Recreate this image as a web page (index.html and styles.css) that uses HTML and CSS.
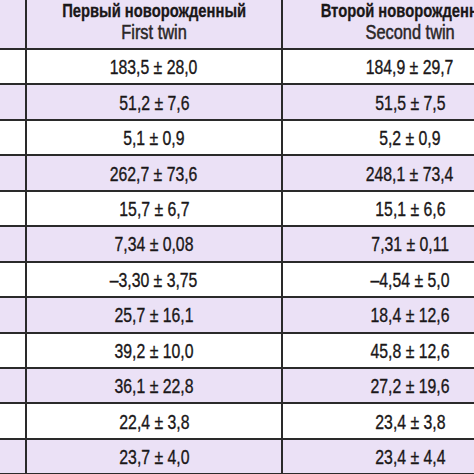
FILE: index.html
```html
<!DOCTYPE html>
<html lang="ru">
<head>
<meta charset="utf-8">
<link rel="stylesheet" href="styles.css">
</head>
<body>
<div class="viewport">
  <div class="table">
    <div class="row head">
      <div class="cell label"></div>
      <div class="cell"><span class="ru">Первый новорожденный</span><span class="en">First twin</span></div>
      <div class="cell"><span class="ru">Второй новорожденный</span><span class="en">Second twin</span></div>
    </div>
    <div class="row"><div class="cell label"></div><div class="cell"><span class="v">183,5 ± 28,0</span></div><div class="cell"><span class="v">184,9 ± 29,7</span></div></div>
    <div class="row alt"><div class="cell label"></div><div class="cell"><span class="v">51,2 ± 7,6</span></div><div class="cell"><span class="v">51,5 ± 7,5</span></div></div>
    <div class="row"><div class="cell label"></div><div class="cell"><span class="v">5,1 ± 0,9</span></div><div class="cell"><span class="v">5,2 ± 0,9</span></div></div>
    <div class="row alt"><div class="cell label"></div><div class="cell"><span class="v">262,7 ± 73,6</span></div><div class="cell"><span class="v">248,1 ± 73,4</span></div></div>
    <div class="row"><div class="cell label"></div><div class="cell"><span class="v">15,7 ± 6,7</span></div><div class="cell"><span class="v">15,1 ± 6,6</span></div></div>
    <div class="row alt"><div class="cell label"></div><div class="cell"><span class="v">7,34 ± 0,08</span></div><div class="cell"><span class="v">7,31 ± 0,11</span></div></div>
    <div class="row"><div class="cell label"></div><div class="cell"><span class="v">–3,30 ± 3,75</span></div><div class="cell"><span class="v">–4,54 ± 5,0</span></div></div>
    <div class="row alt"><div class="cell label"></div><div class="cell"><span class="v">25,7 ± 16,1</span></div><div class="cell"><span class="v">18,4 ± 12,6</span></div></div>
    <div class="row"><div class="cell label"></div><div class="cell"><span class="v">39,2 ± 10,0</span></div><div class="cell"><span class="v">45,8 ± 12,6</span></div></div>
    <div class="row alt"><div class="cell label"></div><div class="cell"><span class="v">36,1 ± 22,8</span></div><div class="cell"><span class="v">27,2 ± 19,6</span></div></div>
    <div class="row"><div class="cell label"></div><div class="cell"><span class="v">22,4 ± 3,8</span></div><div class="cell"><span class="v">23,4 ± 3,8</span></div></div>
    <div class="row alt"><div class="cell label"></div><div class="cell"><span class="v">23,7 ± 4,0</span></div><div class="cell"><span class="v">23,4 ± 4,4</span></div></div>
  </div>
</div>
</body>
</html>
```

FILE: styles.css
```css
html, body {
  margin: 0;
  padding: 0;
  background: #ffffff;
}
.viewport {
  width: 474px;
  height: 474px;
  overflow: hidden;
}
.table {
  margin-left: -100px;
  width: 700px;
  display: flex;
  flex-direction: column;
  font-family: "Liberation Sans", Arial, sans-serif;
  color: #1a1718;
}
.row {
  display: grid;
  grid-template-columns: 127px 256px 256px;
  box-sizing: border-box;
  height: 35.44px;
  border-bottom: 2px solid #2a2a2a;
  background: #ffffff;
}
.row.alt {
  background: #ebe1f6;
}
.row.head {
  height: 50px;
  background: #ebe1f6;
}
.cell {
  box-sizing: border-box;
  border-right: 2px solid #2a2a2a;
  display: flex;
  align-items: center;
  justify-content: center;
  white-space: nowrap;
  padding-top: 2px;
}
.v {
  display: inline-block;
  font-size: 20px;
  transform: scaleX(0.79);
  -webkit-text-stroke: 0.35px #1a1718;
}
.head .cell {
  flex-direction: column;
  justify-content: flex-start;
  padding-top: 0;
}
.ru {
  display: inline-block;
  font-weight: bold;
  font-size: 18px;
  line-height: 22px;
  transform: scaleX(0.82);
  -webkit-text-stroke: 0.3px #1a1718;
}
.en {
  display: inline-block;
  font-size: 19.5px;
  line-height: 21px;
  transform: scaleX(0.84);
  color: #2a2627;
  -webkit-text-stroke: 0.5px #2a2627;
}
```
